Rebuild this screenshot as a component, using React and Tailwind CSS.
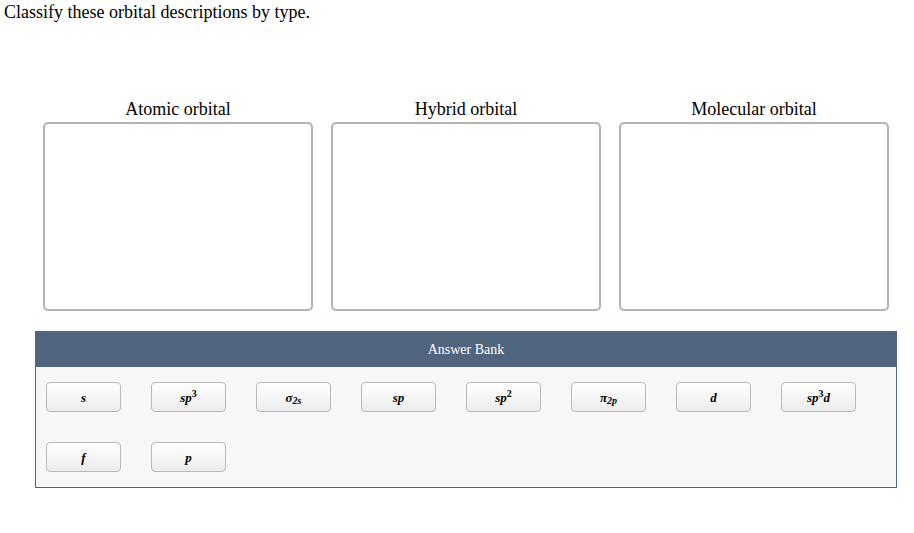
import React from "react";

const serif = { fontFamily: '"Liberation Serif", "Times New Roman", serif' };

const categorias = ["Atomic orbital", "Hybrid orbital", "Molecular orbital"];

const Sup = ({ children }) => <sup className="text-[10px] not-italic">{children}</sup>;
const Sub = ({ children }) => <sub className="text-[10px]">{children}</sub>;

const fichas = [
  { id: "s", label: <>s</> },
  { id: "sp3", label: <>sp<Sup>3</Sup></> },
  { id: "sigma2s", label: <>σ<Sub>2s</Sub></> },
  { id: "sp", label: <>sp</> },
  { id: "sp2", label: <>sp<Sup>2</Sup></> },
  { id: "pi2p", label: <>π<Sub>2p</Sub></> },
  { id: "d", label: <>d</> },
  { id: "sp3d", label: <>sp<Sup>3</Sup>d</> },
  { id: "f", label: <>f</> },
  { id: "p", label: <>p</> },
];

function Ficha({ children }) {
  return (
    <div className="w-[75px] h-[30px] flex items-center justify-center rounded-[4px] border border-[#b9b9b9] bg-gradient-to-b from-white to-[#ececec] text-[13px] font-bold italic text-black leading-none">
      <span>{children}</span>
    </div>
  );
}

export default function App() {
  return (
    <div className="w-[914px] h-[533px] bg-white text-black" style={serif}>
      <p className="pl-[4px] pt-[1px] text-[18px] leading-[22px]">Classify these orbital descriptions by type.</p>

      <div className="flex gap-[18px] pl-[43px] pt-[75px]">
        {categorias.map(c => (
          <div key={c} className="w-[270px] flex flex-col items-center">
            <div className="text-[18px] leading-[22px] mb-[2px]">{c}</div>
            <div className="w-full h-[189px] border-2 border-[#b3b3b3] rounded-[5px] bg-white" />
          </div>
        ))}
      </div>

      <div className="ml-[35px] mt-[20px] w-[862px] border border-[#51657e]">
        <div className="h-[35px] bg-[#51657e] flex items-center justify-center text-white text-[14px]">
          Answer Bank
        </div>
        <div className="bg-[#f7f7f7] h-[120px] pl-[10px] pt-[15px] flex flex-wrap content-start gap-x-[30px] gap-y-[30px]">
          {fichas.map(f => (
            <Ficha key={f.id}>{f.label}</Ficha>
          ))}
        </div>
      </div>
    </div>
  );
}
